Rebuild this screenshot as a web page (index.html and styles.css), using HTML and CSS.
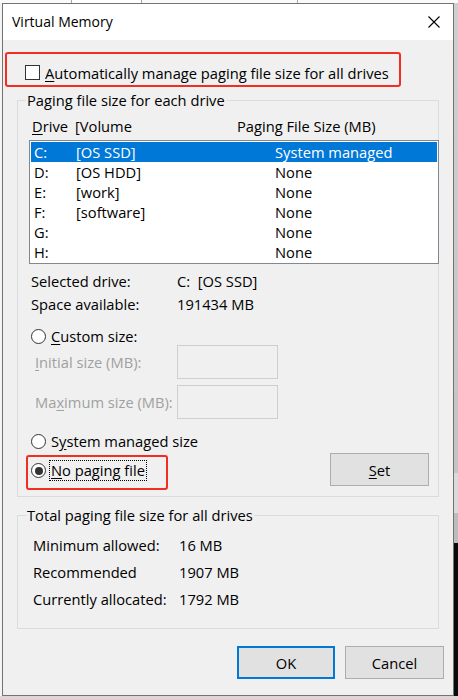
FILE: index.html
```html
<!DOCTYPE html>
<html lang="en">
<head>
<meta charset="utf-8">
<title>Virtual Memory</title>
<link rel="stylesheet" href="styles.css">
</head>
<body>
<div class="screen">
  <div class="behind">
    <div class="behind-tabs">
      <span class="btab btab-1">Sound Effects</span>
      <span class="btab btab-2">Advanced</span>
      <span class="btab btab-3">Data Execution Prevention</span>
    </div>
  </div>
  <div class="middle">
    <div class="left-strip"></div>
    <div class="dialog">
      <div class="titlebar">
        <span class="title">Virtual Memory</span>
        <svg class="close" width="12" height="12" viewBox="0 0 12 12"><path d="M0.5 0.5 L11.5 11.5 M11.5 0.5 L0.5 11.5" stroke="#000" stroke-width="1.1" fill="none"/></svg>
      </div>
      <div class="body">
        <div class="mark auto-box">
          <span class="checkbox"></span>
          <span class="check-label"><u>A</u>utomatically manage paging file size for all drives</span>
        </div>

        <div class="group group-drives">
          <span class="group-label">Paging file size for each drive</span>
          <div class="list-head">
            <span class="hc-drive"><u>D</u>rive</span>
            <span class="hc-vol">[Volume</span>
            <span class="hc-size">Paging File Size (MB)</span>
          </div>
          <div class="listbox">
            <div class="lrow selected"><span class="c-drive">C:</span><span class="c-vol">[OS SSD]</span><span class="c-size">System managed</span></div>
            <div class="lrow"><span class="c-drive">D:</span><span class="c-vol">[OS HDD]</span><span class="c-size">None</span></div>
            <div class="lrow"><span class="c-drive">E:</span><span class="c-vol">[work]</span><span class="c-size">None</span></div>
            <div class="lrow"><span class="c-drive">F:</span><span class="c-vol">[software]</span><span class="c-size">None</span></div>
            <div class="lrow"><span class="c-drive">G:</span><span class="c-vol"></span><span class="c-size">None</span></div>
            <div class="lrow"><span class="c-drive">H:</span><span class="c-vol"></span><span class="c-size">None</span></div>
          </div>
          <div class="info">
            <div class="irow"><span class="ilabel">Selected drive:</span><span class="ival">C:&nbsp; [OS SSD]</span></div>
            <div class="irow"><span class="ilabel">Space available:</span><span class="ival">191434 MB</span></div>
          </div>
          <div class="radio-row custom-row">
            <span class="radio"></span>
            <span class="radio-label"><u>C</u>ustom size:</span>
          </div>
          <div class="field-row initial-row">
            <span class="field-label disabled"><u>I</u>nitial size (MB):</span>
            <span class="textbox"></span>
          </div>
          <div class="field-row max-row">
            <span class="field-label disabled">Ma<u>x</u>imum size (MB):</span>
            <span class="textbox"></span>
          </div>
          <div class="radio-row system-row">
            <span class="radio"></span>
            <span class="radio-label">S<u>y</u>stem managed size</span>
          </div>
          <div class="last-row">
            <div class="mark nopage-box">
              <span class="radio checked"></span>
              <span class="radio-label focus"><u>N</u>o paging file</span>
            </div>
            <button class="btn set-btn"><u>S</u>et</button>
          </div>
        </div>

        <div class="group group-total">
          <span class="group-label">Total paging file size for all drives</span>
          <div class="totals">
            <div class="trow"><span class="tlabel">Minimum allowed:</span><span class="tval">16 MB</span></div>
            <div class="trow"><span class="tlabel">Recommended</span><span class="tval">1907 MB</span></div>
            <div class="trow"><span class="tlabel">Currently allocated:</span><span class="tval">1792 MB</span></div>
          </div>
        </div>

        <div class="buttons">
          <button class="btn ok-btn">OK</button>
          <button class="btn cancel-btn">Cancel</button>
        </div>
      </div>
    </div>
    <div class="right-strip"></div>
  </div>
  <div class="bottom-strip"></div>
</div>
</body>
</html>
```

FILE: styles.css
```css
* { box-sizing: border-box; }

html, body {
  margin: 0;
  padding: 0;
}

body {
  width: 458px;
  height: 699px;
  overflow: hidden;
  background: #f0f0f0;
  font-family: "Open Sans", "Noto Sans", "DejaVu Sans", sans-serif;
  font-size: 14.7px;
  color: #000;
}

.screen {
  width: 458px;
  height: 699px;
  display: flex;
  flex-direction: column;
}

/* parent window peeking out above */
.behind {
  height: 3px;
  overflow: hidden;
  background: #fafafa;
}

.behind-tabs {
  display: flex;
  margin-top: -13px;
  line-height: 18px;
  font-size: 12.5px;
  color: #222;
}

.btab {
  display: block;
  border-right: 1px solid #a8a8a8;
  white-space: nowrap;
  overflow: hidden;
}

.btab-1 { width: 72px; padding-left: 2px; }
.btab-2 { width: 70px; padding-left: 7px; background: #fff; }
.btab-3 { width: 156px; padding-left: 6px; }

.middle {
  display: flex;
  height: 693px;
}

.left-strip {
  width: 2px;
  background: #f4f4f4;
}

.dialog {
  width: 452px;
  height: 693px;
  border: 1px solid #737373;
  background: #f0f0f0;
  display: flex;
  flex-direction: column;
}

.right-strip {
  width: 4px;
  background: linear-gradient(to bottom,
    #cfcfcf 0px, #c4c4c4 470px,
    #dadada 470px, #dadada 510px,
    #bcbcbc 510px, #bcbcbc 540px,
    #0a0a0a 540px, #0a0a0a 693px);
}

.bottom-strip {
  height: 3px;
  background: #d8d8d8;
}

.titlebar {
  height: 36px;
  background: #fff;
  display: flex;
  align-items: center;
  justify-content: space-between;
  padding-left: 9px;
  padding-right: 13px;
  flex: none;
}

.title {
  font-size: 14px;
  line-height: 20px;
}

.close { display: block; }

.body {
  flex: 1;
  display: flex;
  flex-direction: column;
}

u { text-decoration: underline; text-underline-offset: 2px; }

.mark {
  border: 2px solid #f22d22;
  border-radius: 3px;
}

.auto-box {
  margin-top: 12px;
  margin-left: 2px;
  width: 396px;
  height: 35px;
  display: flex;
  align-items: center;
  padding-left: 18px;
  padding-top: 6px;
}

.checkbox {
  width: 15px;
  height: 15px;
  border: 1px solid #333;
  background: #fff;
  flex: none;
}

.check-label {
  margin-left: 5px;
  line-height: 20px;
  white-space: nowrap;
}

.group {
  position: relative;
  border: 1px solid #dcdcdc;
  margin-left: 14px;
  width: 422px;
  display: flex;
  flex-direction: column;
}

.group-label {
  position: absolute;
  top: -11px;
  left: 8px;
  padding: 0 1px;
  background: #f0f0f0;
  line-height: 20px;
  white-space: nowrap;
}

.group-drives {
  margin-top: 13px;
  height: 397px;
}

.list-head {
  margin-top: 15px;
  height: 20px;
  line-height: 20px;
  padding-left: 14px;
  display: flex;
  white-space: nowrap;
}

.hc-drive { width: 43px; }
.hc-vol { width: 162px; }

.listbox {
  margin-top: 4px;
  margin-left: 11px;
  width: 410px;
  height: 124px;
  border: 1px solid #828790;
  padding: 1px;
  background: #fff;
}

.lrow {
  height: 20px;
  line-height: 20px;
  display: flex;
  padding-left: 3px;
  white-space: nowrap;
}

.lrow.selected {
  background: #0078d7;
  color: #fff;
}

.c-drive { width: 42px; }
.c-vol { width: 199px; }

.info {
  margin-top: 6px;
  padding-left: 13px;
}

.irow, .trow {
  display: flex;
  white-space: nowrap;
}

.irow { line-height: 23px; height: 23px; }

.ilabel { width: 146px; }

.radio-row {
  display: flex;
  align-items: center;
  height: 18px;
  padding-left: 13px;
  white-space: nowrap;
}

.custom-row { margin-top: 11px; }
.system-row { margin-top: 13px; }

.radio {
  width: 15px;
  height: 15px;
  border-radius: 50%;
  border: 1px solid #333;
  background: #fff;
  flex: none;
  display: flex;
  align-items: center;
  justify-content: center;
}

.radio.checked::after {
  content: "";
  width: 8px;
  height: 8px;
  border-radius: 50%;
  background: #333;
}

.radio-label {
  margin-left: 5px;
  line-height: 20px;
}

.field-row {
  display: flex;
  align-items: center;
  padding-left: 17px;
  white-space: nowrap;
}

.max-row { margin-top: 6px; }

.field-label { width: 142px; }

.disabled { color: #a0a0a0; }

.textbox {
  width: 101px;
  height: 34px;
  border: 1px solid #cfcfcf;
  background: #f0f0f0;
  display: block;
}

.last-row {
  margin-top: 3px;
  display: flex;
  align-items: flex-start;
}

.nopage-box {
  margin-top: 2px;
  margin-left: 8px;
  width: 142px;
  height: 35px;
  display: flex;
  align-items: center;
  padding-left: 3px;
  padding-bottom: 4px;
}

.nopage-box .radio-label {
  margin-left: 3px;
  border: 1px dotted #000;
  padding: 0 1px;
  line-height: 19px;
  white-space: nowrap;
}

.btn {
  font-family: inherit;
  font-size: 14.7px;
  color: #000;
  background: #e1e1e1;
  border: 1px solid #adadad;
  padding: 0;
  margin: 0;
  height: 33px;
}

.set-btn {
  width: 99px;
  margin-left: 162px;
}

.group-total {
  margin-top: 18px;
  height: 114px;
}

.totals {
  margin-top: 16px;
  padding-left: 15px;
}

.trow { height: 27px; line-height: 27px; }

.tlabel { width: 146px; }

.buttons {
  margin-top: 17px;
  display: flex;
  justify-content: flex-end;
  gap: 10px;
  padding-right: 9px;
}

.ok-btn {
  width: 98px;
  border: 2px solid #0078d7;
}

.cancel-btn { width: 99px; }
```
